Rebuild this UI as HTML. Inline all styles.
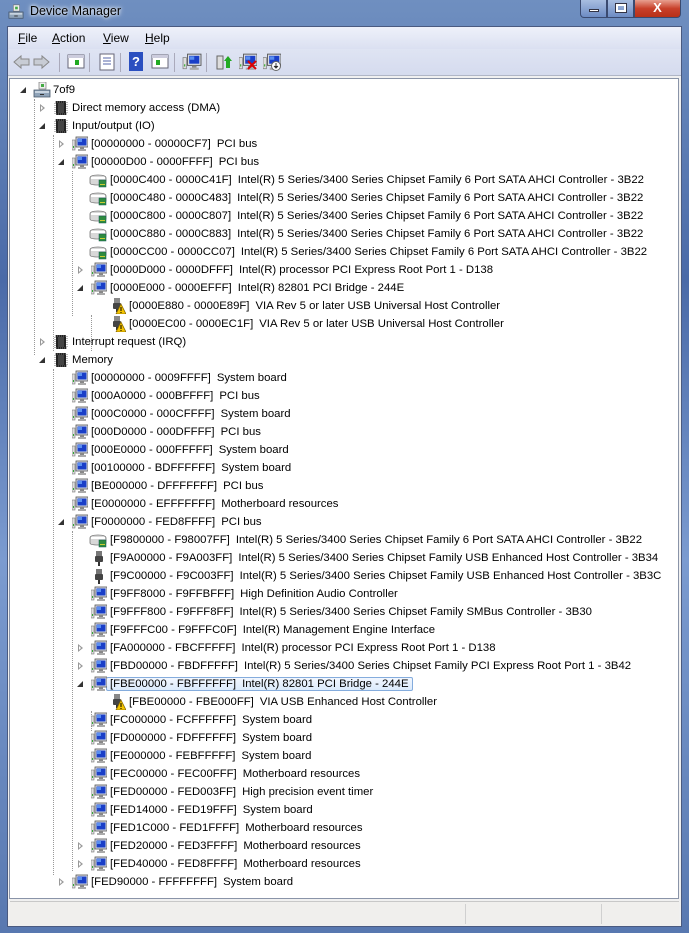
<!DOCTYPE html>
<html><head><meta charset="utf-8"><style>
*{margin:0;padding:0;box-sizing:border-box}
body{width:689px;height:933px;overflow:hidden;font-family:"Liberation Sans",sans-serif;font-size:11px;color:#000;background:linear-gradient(180deg,#6f8fc0 0%,#4a6aa8 30%,#7b9bd0 60%,#5878b0 100%);position:relative}
.title{position:absolute;left:30px;top:4px;font-size:12.5px;color:#000;text-shadow:0 0 6px #fff,0 0 3px #fff}
.tb{position:absolute;top:0;height:18px;border:1px solid #3a4a70;border-top:none}
.client{position:absolute;left:7px;top:26px;width:675px;height:901px;background:#f0f0f0;border:1px solid #4a5a80}
.menu{position:absolute;left:0;top:0;width:673px;height:22px;background:linear-gradient(#eef1fa,#dbe0f1);font-size:12px}
.menu span{position:absolute;top:4px}
.tool{position:absolute;left:0;top:22px;width:673px;height:27px;background:linear-gradient(#dfe4f3,#d5dbee);border-bottom:1px solid #b0b6c6}
.tree{position:absolute;left:1px;top:51px;width:670px;height:821px;background:#fff;border:1px solid #8a94a8}
.status{position:absolute;left:2px;top:874px;width:669px;height:24px;background:#f0efed;border-top:1px solid #c8c8c8}
.r{position:absolute;height:18px;line-height:18px;white-space:nowrap;font-size:11.35px}
.r svg{position:absolute;top:1px;left:-19px}
.e{position:absolute;left:-33px;top:5px;width:8px;height:8px}
.c{border-left:5px solid transparent}
.c::after{content:"";position:absolute;left:-4px;top:0;border-left:5px solid #999;border-top:4px solid transparent;border-bottom:4px solid transparent}
.c::before{content:"";position:absolute;left:-3px;top:2px;border-left:2px solid #fff;border-top:2px solid transparent;border-bottom:2px solid transparent;z-index:1}
.o::after{content:"";position:absolute;left:0;top:1px;border-right:6px solid #333;border-top:6px solid transparent}
.sel{background:linear-gradient(#f2f7fe,#dbebfc);border:1px solid #84acdd;border-radius:2px;padding:0 3px;margin-left:-4px;line-height:16px}
.d{margin-left:6px}
.ti{position:absolute;top:4px}
</style></head><body>
<svg width="0" height="0" style="position:absolute">
<defs>
<symbol id="mon" viewBox="0 0 16 16"><rect x="0" y="4" width="3" height="10" fill="#ddd" stroke="#777" stroke-width=".6"/><rect x="1" y="10" width="1" height="2" fill="#3a3"/><rect x="4" y="1" width="12" height="10" fill="#d8dce4" stroke="#555" stroke-width=".8"/><rect x="5.5" y="2.5" width="9" height="7" fill="#1a3fc8"/><rect x="6" y="3" width="4" height="3" fill="#5a8ff0"/><rect x="8" y="11" width="4" height="2" fill="#888"/><rect x="6" y="13" width="8" height="2" fill="#aaa"/></symbol>
<symbol id="chip" viewBox="0 0 16 16"><rect x="3" y="1" width="10" height="14" fill="#222"/><rect x="2" y="2" width="12" height="12" fill="none" stroke="#777" stroke-dasharray="1 1"/><rect x="5" y="3" width="6" height="10" fill="#444"/></symbol>
<symbol id="disk" viewBox="0 0 18 16"><path d="M1 6 Q1 3 9 3 Q17 3 17 6 L17 11 Q17 13 9 13 Q1 13 1 11Z" fill="#d8d8d8" stroke="#777" stroke-width=".8"/><rect x="2" y="5" width="14" height="2" fill="#fff"/><rect x="10" y="8" width="7" height="7" fill="#2e8b3e" stroke="#155" stroke-width=".5"/><rect x="11" y="12" width="5" height="1" fill="#cc3"/></symbol>
<symbol id="usb" viewBox="0 0 16 16"><rect x="5" y="1" width="6" height="6" fill="#777"/><rect x="4" y="6" width="8" height="6" rx="1" fill="#444"/><rect x="7" y="12" width="2" height="4" fill="#333"/></symbol>
<symbol id="usbw" viewBox="0 0 16 16"><rect x="4" y="0" width="6" height="6" fill="#888"/><rect x="3" y="5" width="8" height="6" rx="1" fill="#444"/><rect x="6" y="11" width="2" height="3" fill="#333"/><path d="M11 6 L16 16 L6 16Z" fill="#f4c400" stroke="#8a6a00" stroke-width=".8"/><rect x="10.5" y="9" width="1" height="4" fill="#000"/><rect x="10.5" y="14" width="1" height="1" fill="#000"/></symbol>
<symbol id="comp" viewBox="0 0 18 16"><rect x="6" y="0" width="7" height="7" fill="#eee" stroke="#666" stroke-width=".6"/><rect x="8" y="2" width="3" height="3" fill="#4a4"/><path d="M1 8 L17 8 L17 15 L1 15Z" fill="#8fa3b8" stroke="#45566a" stroke-width=".8"/><rect x="2" y="9" width="14" height="2" fill="#c8d4e0"/><rect x="7" y="12" width="4" height="1" fill="#333"/></symbol>
</defs></svg>
<div class="title">Device Manager</div>
<svg style="position:absolute;left:8px;top:4px" width="16" height="16"><use href="#comp"/></svg>
<div class="tb" style="left:580px;width:27px;border-radius:0 0 0 4px;background:linear-gradient(#a8bde0,#6d8cc4)"><div style="position:absolute;left:8px;top:9px;width:10px;height:3px;background:#fff;border:1px solid #334"></div></div>
<div class="tb" style="left:607px;width:27px;background:linear-gradient(#a8bde0,#6d8cc4)"><div style="position:absolute;left:8px;top:4px;width:10px;height:8px;border:2px solid #fff;outline:1px solid #334"></div></div>
<div class="tb" style="left:634px;width:47px;border-radius:0 0 4px 0;background:linear-gradient(#e8a090,#c8402a 50%,#b83018);color:#fff;font-weight:bold;font-size:13px;text-align:center;line-height:16px">X</div>
<div class="client">
<div class="menu"><span style="left:10px"><u>F</u>ile</span><span style="left:44px"><u>A</u>ction</span><span style="left:95px"><u>V</u>iew</span><span style="left:137px"><u>H</u>elp</span></div>
<div class="tool">
<svg class="ti" style="left:4px" width="40" height="18"><path d="M2 9 L9 3 L9 6 L17 6 L17 12 L9 12 L9 15Z M22 6 L30 6 L30 3 L37 9 L30 15 L30 12 L22 12Z" fill="#c8ccd4" stroke="#888"/></svg>
<div style="position:absolute;left:51px;top:4px;width:1px;height:19px;background:#aab"></div>
<svg class="ti" style="left:59px" width="18" height="18"><rect x="1" y="2" width="16" height="13" fill="#fff" stroke="#667"/><rect x="1" y="2" width="16" height="3" fill="#ccd"/><rect x="8" y="7" width="4" height="5" fill="#2a2"/></svg>
<div style="position:absolute;left:81px;top:4px;width:1px;height:19px;background:#aab"></div>
<svg class="ti" style="left:90px" width="18" height="18"><rect x="2" y="1" width="14" height="16" fill="#fff" stroke="#667"/><path d="M5 5h8M5 8h8M5 11h8" stroke="#56a"/></svg>
<div style="position:absolute;left:112px;top:4px;width:1px;height:19px;background:#aab"></div>
<div style="position:absolute;left:121px;top:3px;width:14px;height:19px;background:#2a4fc0;color:#fff;font-weight:bold;text-align:center;line-height:19px;font-size:13px">?</div>
<svg class="ti" style="left:143px" width="18" height="18"><rect x="1" y="2" width="16" height="13" fill="#fff" stroke="#667"/><rect x="1" y="2" width="16" height="3" fill="#ccd"/><rect x="5" y="7" width="4" height="5" fill="#2a2"/></svg>
<div style="position:absolute;left:166px;top:4px;width:1px;height:19px;background:#aab"></div>
<svg class="ti" style="left:174px" width="20" height="18"><use href="#mon"/></svg>
<div style="position:absolute;left:198px;top:4px;width:1px;height:19px;background:#aab"></div>
<svg class="ti" style="left:207px" width="18" height="18"><rect x="2" y="3" width="6" height="13" fill="#ddd" stroke="#666"/><path d="M9 8 L13 3 L17 8 L15 8 L15 15 L11 15 L11 8Z" fill="#2a2"/></svg>
<svg class="ti" style="left:231px" width="18" height="18"><use href="#mon"/><path d="M9 8 L17 16 M17 8 L9 16" stroke="#d00" stroke-width="2"/></svg>
<svg class="ti" style="left:255px" width="18" height="18"><use href="#mon"/><circle cx="13" cy="13" r="4.5" fill="#fff" stroke="#666"/><path d="M13 10v5M11 13l2 2 2-2" stroke="#333"/></svg>
</div>
<div class="tree">
<div style="position:absolute;left:24px;top:20px;height:256px;border-left:1px dotted #999"></div>
<div style="position:absolute;left:43px;top:56px;height:216px;border-left:1px dotted #999"></div>
<div style="position:absolute;left:43px;top:290px;height:506px;border-left:1px dotted #999"></div>
<div style="position:absolute;left:62px;top:452px;height:340px;border-left:1px dotted #999"></div>
<div style="position:absolute;left:81px;top:632px;height:20px;border-left:1px dotted #999"></div>
<div style="position:absolute;left:62px;top:92px;height:145px;border-left:1px dotted #999"></div>
<div style="position:absolute;left:81px;top:236px;height:36px;border-left:1px dotted #999"></div>

<div class="r" style="left:43px;top:2px"><span class="e o"></span><svg width="18" height="16" style="left:-20px"><use href="#comp"/></svg>7of9</div>
<div class="r" style="left:62px;top:20px"><span class="e c"></span><svg width="16" height="16"><use href="#chip"/></svg>Direct memory access (DMA)</div>
<div class="r" style="left:62px;top:38px"><span class="e o"></span><svg width="16" height="16"><use href="#chip"/></svg>Input/output (IO)</div>
<div class="r" style="left:81px;top:56px"><span class="e c"></span><svg width="16" height="16"><use href="#mon"/></svg>[00000000 - 00000CF7]<span class="d">PCI bus</span></div>
<div class="r" style="left:81px;top:74px"><span class="e o"></span><svg width="16" height="16"><use href="#mon"/></svg>[00000D00 - 0000FFFF]<span class="d">PCI bus</span></div>
<div class="r" style="left:100px;top:92px"><svg width="18" height="16" style="left:-21px"><use href="#disk"/></svg>[0000C400 - 0000C41F]<span class="d">Intel(R) 5 Series/3400 Series Chipset Family 6 Port SATA AHCI Controller - 3B22</span></div>
<div class="r" style="left:100px;top:110px"><svg width="18" height="16" style="left:-21px"><use href="#disk"/></svg>[0000C480 - 0000C483]<span class="d">Intel(R) 5 Series/3400 Series Chipset Family 6 Port SATA AHCI Controller - 3B22</span></div>
<div class="r" style="left:100px;top:128px"><svg width="18" height="16" style="left:-21px"><use href="#disk"/></svg>[0000C800 - 0000C807]<span class="d">Intel(R) 5 Series/3400 Series Chipset Family 6 Port SATA AHCI Controller - 3B22</span></div>
<div class="r" style="left:100px;top:146px"><svg width="18" height="16" style="left:-21px"><use href="#disk"/></svg>[0000C880 - 0000C883]<span class="d">Intel(R) 5 Series/3400 Series Chipset Family 6 Port SATA AHCI Controller - 3B22</span></div>
<div class="r" style="left:100px;top:164px"><svg width="18" height="16" style="left:-21px"><use href="#disk"/></svg>[0000CC00 - 0000CC07]<span class="d">Intel(R) 5 Series/3400 Series Chipset Family 6 Port SATA AHCI Controller - 3B22</span></div>
<div class="r" style="left:100px;top:182px"><span class="e c"></span><svg width="16" height="16"><use href="#mon"/></svg>[0000D000 - 0000DFFF]<span class="d">Intel(R) processor PCI Express Root Port 1 - D138</span></div>
<div class="r" style="left:100px;top:200px"><span class="e o"></span><svg width="16" height="16"><use href="#mon"/></svg>[0000E000 - 0000EFFF]<span class="d">Intel(R) 82801 PCI Bridge - 244E</span></div>
<div class="r" style="left:119px;top:218px"><svg width="16" height="16"><use href="#usbw"/></svg>[0000E880 - 0000E89F]<span class="d">VIA Rev 5 or later USB Universal Host Controller</span></div>
<div class="r" style="left:119px;top:236px"><svg width="16" height="16"><use href="#usbw"/></svg>[0000EC00 - 0000EC1F]<span class="d">VIA Rev 5 or later USB Universal Host Controller</span></div>
<div class="r" style="left:62px;top:254px"><span class="e c"></span><svg width="16" height="16"><use href="#chip"/></svg>Interrupt request (IRQ)</div>
<div class="r" style="left:62px;top:272px"><span class="e o"></span><svg width="16" height="16"><use href="#chip"/></svg>Memory</div>
<div class="r" style="left:81px;top:290px"><svg width="16" height="16"><use href="#mon"/></svg>[00000000 - 0009FFFF]<span class="d">System board</span></div>
<div class="r" style="left:81px;top:308px"><svg width="16" height="16"><use href="#mon"/></svg>[000A0000 - 000BFFFF]<span class="d">PCI bus</span></div>
<div class="r" style="left:81px;top:326px"><svg width="16" height="16"><use href="#mon"/></svg>[000C0000 - 000CFFFF]<span class="d">System board</span></div>
<div class="r" style="left:81px;top:344px"><svg width="16" height="16"><use href="#mon"/></svg>[000D0000 - 000DFFFF]<span class="d">PCI bus</span></div>
<div class="r" style="left:81px;top:362px"><svg width="16" height="16"><use href="#mon"/></svg>[000E0000 - 000FFFFF]<span class="d">System board</span></div>
<div class="r" style="left:81px;top:380px"><svg width="16" height="16"><use href="#mon"/></svg>[00100000 - BDFFFFFF]<span class="d">System board</span></div>
<div class="r" style="left:81px;top:398px"><svg width="16" height="16"><use href="#mon"/></svg>[BE000000 - DFFFFFFF]<span class="d">PCI bus</span></div>
<div class="r" style="left:81px;top:416px"><svg width="16" height="16"><use href="#mon"/></svg>[E0000000 - EFFFFFFF]<span class="d">Motherboard resources</span></div>
<div class="r" style="left:81px;top:434px"><span class="e o"></span><svg width="16" height="16"><use href="#mon"/></svg>[F0000000 - FED8FFFF]<span class="d">PCI bus</span></div>
<div class="r" style="left:100px;top:452px"><svg width="18" height="16" style="left:-21px"><use href="#disk"/></svg>[F9800000 - F98007FF]<span class="d">Intel(R) 5 Series/3400 Series Chipset Family 6 Port SATA AHCI Controller - 3B22</span></div>
<div class="r" style="left:100px;top:470px"><svg width="16" height="16"><use href="#usb"/></svg>[F9A00000 - F9A003FF]<span class="d">Intel(R) 5 Series/3400 Series Chipset Family USB Enhanced Host Controller - 3B34</span></div>
<div class="r" style="left:100px;top:488px"><svg width="16" height="16"><use href="#usb"/></svg>[F9C00000 - F9C003FF]<span class="d">Intel(R) 5 Series/3400 Series Chipset Family USB Enhanced Host Controller - 3B3C</span></div>
<div class="r" style="left:100px;top:506px"><svg width="16" height="16"><use href="#mon"/></svg>[F9FF8000 - F9FFBFFF]<span class="d">High Definition Audio Controller</span></div>
<div class="r" style="left:100px;top:524px"><svg width="16" height="16"><use href="#mon"/></svg>[F9FFF800 - F9FFF8FF]<span class="d">Intel(R) 5 Series/3400 Series Chipset Family SMBus Controller - 3B30</span></div>
<div class="r" style="left:100px;top:542px"><svg width="16" height="16"><use href="#mon"/></svg>[F9FFFC00 - F9FFFC0F]<span class="d">Intel(R) Management Engine Interface</span></div>
<div class="r" style="left:100px;top:560px"><span class="e c"></span><svg width="16" height="16"><use href="#mon"/></svg>[FA000000 - FBCFFFFF]<span class="d">Intel(R) processor PCI Express Root Port 1 - D138</span></div>
<div class="r" style="left:100px;top:578px"><span class="e c"></span><svg width="16" height="16"><use href="#mon"/></svg>[FBD00000 - FBDFFFFF]<span class="d">Intel(R) 5 Series/3400 Series Chipset Family PCI Express Root Port 1 - 3B42</span></div>
<div class="r" style="left:100px;top:596px"><span class="e o"></span><svg width="16" height="16"><use href="#mon"/></svg><span class="sel">[FBE00000 - FBFFFFFF]<span class="d">Intel(R) 82801 PCI Bridge - 244E</span></span></div>
<div class="r" style="left:119px;top:614px"><svg width="16" height="16"><use href="#usbw"/></svg>[FBE00000 - FBE000FF]<span class="d">VIA USB Enhanced Host Controller</span></div>
<div class="r" style="left:100px;top:632px"><svg width="16" height="16"><use href="#mon"/></svg>[FC000000 - FCFFFFFF]<span class="d">System board</span></div>
<div class="r" style="left:100px;top:650px"><svg width="16" height="16"><use href="#mon"/></svg>[FD000000 - FDFFFFFF]<span class="d">System board</span></div>
<div class="r" style="left:100px;top:668px"><svg width="16" height="16"><use href="#mon"/></svg>[FE000000 - FEBFFFFF]<span class="d">System board</span></div>
<div class="r" style="left:100px;top:686px"><svg width="16" height="16"><use href="#mon"/></svg>[FEC00000 - FEC00FFF]<span class="d">Motherboard resources</span></div>
<div class="r" style="left:100px;top:704px"><svg width="16" height="16"><use href="#mon"/></svg>[FED00000 - FED003FF]<span class="d">High precision event timer</span></div>
<div class="r" style="left:100px;top:722px"><svg width="16" height="16"><use href="#mon"/></svg>[FED14000 - FED19FFF]<span class="d">System board</span></div>
<div class="r" style="left:100px;top:740px"><svg width="16" height="16"><use href="#mon"/></svg>[FED1C000 - FED1FFFF]<span class="d">Motherboard resources</span></div>
<div class="r" style="left:100px;top:758px"><span class="e c"></span><svg width="16" height="16"><use href="#mon"/></svg>[FED20000 - FED3FFFF]<span class="d">Motherboard resources</span></div>
<div class="r" style="left:100px;top:776px"><span class="e c"></span><svg width="16" height="16"><use href="#mon"/></svg>[FED40000 - FED8FFFF]<span class="d">Motherboard resources</span></div>
<div class="r" style="left:81px;top:794px"><span class="e c"></span><svg width="16" height="16"><use href="#mon"/></svg>[FED90000 - FFFFFFFF]<span class="d">System board</span></div>
</div>
<div class="status"><div style="position:absolute;left:455px;top:2px;width:1px;height:20px;background:#d0d0d0"></div><div style="position:absolute;left:591px;top:2px;width:1px;height:20px;background:#d0d0d0"></div></div>
</div>
</body></html>
